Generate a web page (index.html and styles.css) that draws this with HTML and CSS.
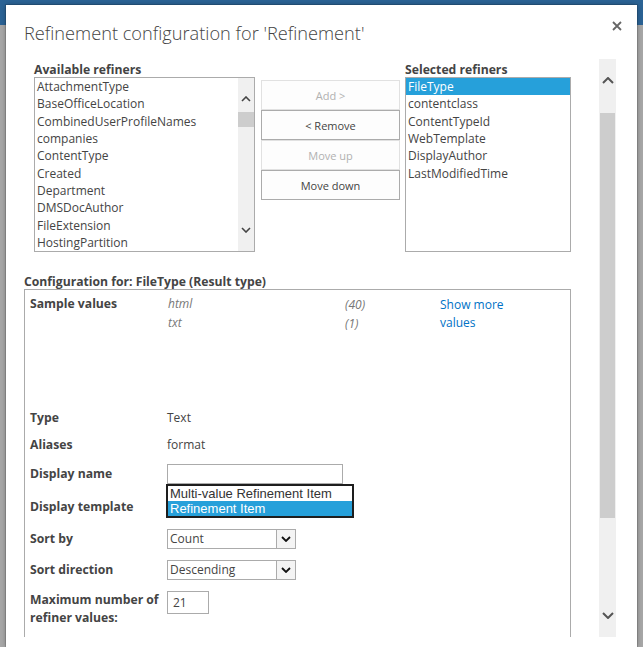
FILE: index.html
```html
<!DOCTYPE html>
<html lang="en">
<head>
<meta charset="utf-8">
<title>Refinement configuration</title>
<link rel="stylesheet" href="styles.css">
</head>
<body>
<div class="dialog">
  <div class="hdr">
    <h1 class="title">Refinement configuration for 'Refinement'</h1>
    <svg class="close" viewBox="0 0 10 10" width="10" height="10"><path d="M1 1L9 9M9 1L1 9" stroke="#666" stroke-width="1.8" fill="none"/></svg>
  </div>
  <div class="body">
    <div class="content">
      <div class="pickers">
        <div class="col-avail">
          <div class="lbl">Available refiners</div>
          <div class="listbox avail">
            <ul class="items">
              <li>AttachmentType</li>
              <li>BaseOfficeLocation</li>
              <li>CombinedUserProfileNames</li>
              <li>companies</li>
              <li>ContentType</li>
              <li>Created</li>
              <li>Department</li>
              <li>DMSDocAuthor</li>
              <li>FileExtension</li>
              <li>HostingPartition</li>
            </ul>
            <div class="lb-scroll">
              <div class="lb-up"><svg viewBox="0 0 10 6" width="10" height="6"><path d="M1 5L5 1L9 5" stroke="#444" stroke-width="1.6" fill="none"/></svg></div>
              <div class="lb-thumb"></div>
              <div class="lb-fill"></div>
              <div class="lb-down"><svg viewBox="0 0 10 6" width="10" height="6"><path d="M1 1L5 5L9 1" stroke="#444" stroke-width="1.6" fill="none"/></svg></div>
            </div>
          </div>
        </div>
        <div class="btns">
          <button class="btn off">Add &gt;</button>
          <button class="btn">&lt; Remove</button>
          <button class="btn off">Move up</button>
          <button class="btn">Move down</button>
        </div>
        <div class="col-sel">
          <div class="lbl">Selected refiners</div>
          <div class="listbox sel">
            <ul class="items">
              <li class="hl">FileType</li>
              <li>contentclass</li>
              <li>ContentTypeId</li>
              <li>WebTemplate</li>
              <li>DisplayAuthor</li>
              <li>LastModifiedTime</li>
            </ul>
          </div>
        </div>
      </div>
      <div class="cfg-lbl">Configuration for: FileType (Result type)</div>
      <div class="cfg">
        <div class="row r-sample">
          <div class="k">Sample values</div>
          <div class="samples">
            <div class="sv">html</div><div class="sc">(40)</div><a class="more">Show more values</a>
            <div class="sv">txt</div><div class="sc">(1)</div>
          </div>
        </div>
        <div class="row r-type"><div class="k">Type</div><div class="v">Text</div></div>
        <div class="row r-alias"><div class="k">Aliases</div><div class="v">format</div></div>
        <div class="row r-name"><div class="k">Display name</div><div class="v"><div class="textbox"></div></div></div>
        <div class="row r-tpl"><div class="k">Display template</div>
          <div class="v tplcell">
            <ul class="openlist">
              <li>Multi-value Refinement Item</li>
              <li class="hl">Refinement Item</li>
            </ul>
          </div>
        </div>
        <div class="row r-sort"><div class="k">Sort by</div><div class="v">
          <div class="select"><span class="sel-text">Count</span><span class="sel-arrow"><svg viewBox="0 0 10 6" width="10" height="6"><path d="M1 1L5 5L9 1" stroke="#111" stroke-width="1.8" fill="none"/></svg></span></div>
        </div></div>
        <div class="row r-dir"><div class="k">Sort direction</div><div class="v">
          <div class="select"><span class="sel-text">Descending</span><span class="sel-arrow"><svg viewBox="0 0 10 6" width="10" height="6"><path d="M1 1L5 5L9 1" stroke="#111" stroke-width="1.8" fill="none"/></svg></span></div>
        </div></div>
        <div class="row r-max"><div class="k">Maximum number of refiner values:</div><div class="v"><div class="numbox">21</div></div></div>
      </div>
    </div>
    <div class="vscroll">
      <div class="vs-up"><svg viewBox="0 0 12 7" width="12" height="7"><path d="M1 6L6 1L11 6" stroke="#555" stroke-width="2" fill="none"/></svg></div>
      <div class="vs-thumb"></div>
      <div class="vs-fill"></div>
      <div class="vs-down"><svg viewBox="0 0 12 7" width="12" height="7"><path d="M1 1L6 6L11 1" stroke="#555" stroke-width="2" fill="none"/></svg></div>
    </div>
  </div>
</div>
</body>
</html>
```
FILE: styles.css
```css
* { box-sizing: border-box; }
html, body { margin: 0; height: 647px; overflow: hidden; }
body {
  background: linear-gradient(#2b6395 0, #2b6395 25px, #a7a7a7 25px);
  font-family: "Open Sans", "Noto Sans", sans-serif;
  color: #444;
  font-size: 12px;
}
.dialog {
  margin: 5px 0 0 6px;
  width: 631px;
  height: 642px;
  background: #fff;
  box-shadow: 0 0 0 1px rgba(0,0,0,0.12), 0 0 5px rgba(0,0,0,0.3);
}
.hdr {
  display: flex;
  justify-content: space-between;
  align-items: flex-start;
  height: 54px;
  padding: 15px 15px 0 18px;
}
.title {
  margin: 0;
  font-weight: 300;
  font-size: 18.2px;
  line-height: 26px;
  color: #444;
}
.close { display: block; margin-top: 1px; }
.body { display: flex; height: 578px; }
.content { width: 593px; padding-left: 18px; overflow: hidden; }

.pickers { display: flex; padding: 3px 0 0 10px; }
.lbl { font-weight: 700; font-size: 12.2px; line-height: 15px; height: 15px; white-space: nowrap; }
.col-avail { width: 221px; }
.col-sel { width: 166px; margin-left: 5px; }
.listbox {
  height: 175px;
  border: 1px solid #ababab;
  display: flex;
  background: #fff;
}
.items { list-style: none; margin: 0; padding: 0; flex: 1; }
.items li { line-height: 17.33px; height: 17.33px; padding-left: 2px; white-space: nowrap; font-size: 12px; color: #444; }
.items li.hl { background: #26a0da; color: #fff; }
.lb-scroll { width: 16px; background: #f0f0f0; display: flex; flex-direction: column; }
.lb-up { height: 34px; display: flex; justify-content: center; padding-top: 18px; }
.lb-thumb { height: 15px; background: #cdcdcd; }
.lb-fill { flex: 1; }
.lb-down { height: 34px; display: flex; justify-content: center; padding-top: 10px; }

.btns { width: 139px; margin: 18px 0 0 6px; display: flex; flex-direction: column; }
.btn {
  height: 30px;
  margin: 0;
  font-family: "Open Sans", "Noto Sans", sans-serif;
  font-size: 11px;
  color: #444;
  background: #fdfdfd;
  border: 1px solid #ababab;
  padding: 0;
}
.btn.off { color: #b1b1b1; border-color: #e1e1e1; }

.cfg-lbl { margin-top: 22px; font-weight: 700; font-size: 12.2px; line-height: 15px; height: 15px; white-space: nowrap; }
.cfg {
  width: 547px;
  height: 400px;
  border: 1px solid #ababab;
  border-bottom: 0;
  padding-left: 5px;
}
.row { display: flex; align-items: center; }
.k { width: 137px; font-weight: 700; font-size: 12.2px; line-height: 18px; }
.v { font-size: 12px; line-height: 18px; }
.r-sample { height: 115px; align-items: flex-start; padding-top: 5px; }
.samples { display: grid; grid-template-columns: 177px 95px 80px; padding-left: 1px; line-height: 18px; }
.sv, .sc { font-style: italic; color: #777; }
.sc { padding-top: 1px; }
.more { grid-row: 1 / span 2; grid-column: 3; color: #0072c6; padding-top: 1px; }
.r-type { height: 26px; }
.r-alias { height: 28px; }
.r-name { height: 29px; }
.r-tpl { height: 38px; }
.r-sort { height: 26px; }
.r-dir { height: 36px; }
.r-max { height: 60px; align-items: flex-start; padding-top: 3px; }
.r-max .k { width: 137px; padding-right: 4px; }
.textbox { width: 176px; height: 20px; border: 1px solid #ababab; }
.tplcell { position: relative; width: 188px; height: 20px; }
.openlist {
  position: absolute;
  left: -1px;
  top: -13px;
  width: 188px;
  height: 34px;
  margin: 0;
  padding: 0;
  list-style: none;
  border: 2px solid #1e1e1e;
  background: #fff;
  font-family: "Liberation Sans", Arial, sans-serif;
  font-size: 13px;
}
.openlist li { height: 15px; line-height: 15px; padding-left: 2px; color: #333; white-space: nowrap; }
.openlist li.hl { background: #26a0da; color: #fff; }
.select {
  width: 129px;
  height: 20px;
  border: 1px solid #ababab;
  display: flex;
  align-items: stretch;
}
.sel-text { flex: 1; padding-left: 2px; line-height: 18px; color: #444; }
.sel-arrow {
  width: 19px;
  border-left: 1px solid #ababab;
  background: #f4f4f4;
  display: flex;
  align-items: center;
  justify-content: center;
}
.numbox { width: 42px; height: 23px; border: 1px solid #ababab; padding-left: 5px; line-height: 21px; }

.vscroll { width: 17px; background: #f0f0f0; display: flex; flex-direction: column; }
.vs-up { height: 54px; display: flex; justify-content: center; padding-top: 18px; }
.vs-thumb { height: 405px; margin: 0 1px; background: #cdcdcd; }
.vs-fill { flex: 1; }
.vs-down { height: 42px; display: flex; justify-content: center; padding-top: 17px; }
```
